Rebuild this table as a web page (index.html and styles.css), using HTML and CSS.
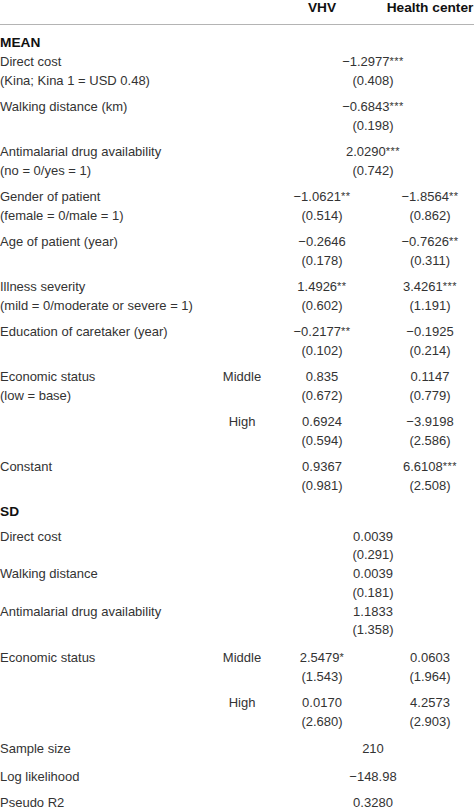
FILE: index.html
```html
<!DOCTYPE html>
<html>
<head>
<meta charset="utf-8">
<link rel="stylesheet" href="styles.css">
</head>
<body>
<div class="table">
  <div class="row head">
    <div class="c-label"></div>
    <div class="c-sub"></div>
    <div class="c-vhv">VHV</div>
    <div class="c-hc">Health center</div>
  </div>

  <div class="row section first"><div class="c-label">MEAN</div></div>

  <div class="row">
    <div class="c-label">Direct cost<br>(Kina; Kina 1 = USD 0.48)</div>
    <div class="c-span">−1.2977<span class="st">***</span><br>(0.408)</div>
  </div>
  <div class="row">
    <div class="c-label">Walking distance (km)</div>
    <div class="c-span">−0.6843<span class="st">***</span><br>(0.198)</div>
  </div>
  <div class="row">
    <div class="c-label">Antimalarial drug availability<br>(no = 0/yes = 1)</div>
    <div class="c-span">2.0290<span class="st">***</span><br>(0.742)</div>
  </div>
  <div class="row">
    <div class="c-label">Gender of patient<br>(female = 0/male = 1)</div>
    <div class="c-vhv">−1.0621<span class="st">**</span><br>(0.514)</div>
    <div class="c-hc">−1.8564<span class="st">**</span><br>(0.862)</div>
  </div>
  <div class="row">
    <div class="c-label">Age of patient (year)</div>
    <div class="c-vhv">−0.2646<br>(0.178)</div>
    <div class="c-hc">−0.7626<span class="st">**</span><br>(0.311)</div>
  </div>
  <div class="row">
    <div class="c-label">Illness severity<br>(mild = 0/moderate or severe = 1)</div>
    <div class="c-vhv">1.4926<span class="st">**</span><br>(0.602)</div>
    <div class="c-hc">3.4261<span class="st">***</span><br>(1.191)</div>
  </div>
  <div class="row">
    <div class="c-label">Education of caretaker (year)</div>
    <div class="c-vhv">−0.2177<span class="st">**</span><br>(0.102)</div>
    <div class="c-hc">−0.1925<br>(0.214)</div>
  </div>
  <div class="row">
    <div class="c-label">Economic status<br>(low = base)</div>
    <div class="c-sub">Middle</div>
    <div class="c-vhv">0.835<br>(0.672)</div>
    <div class="c-hc">0.1147<br>(0.779)</div>
  </div>
  <div class="row">
    <div class="c-label"></div>
    <div class="c-sub">High</div>
    <div class="c-vhv">0.6924<br>(0.594)</div>
    <div class="c-hc">−3.9198<br>(2.586)</div>
  </div>
  <div class="row">
    <div class="c-label">Constant</div>
    <div class="c-vhv">0.9367<br>(0.981)</div>
    <div class="c-hc">6.6108<span class="st">***</span><br>(2.508)</div>
  </div>

  <div class="row section"><div class="c-label">SD</div></div>

  <div class="row tight">
    <div class="c-label">Direct cost</div>
    <div class="c-span">0.0039<br>(0.291)</div>
  </div>
  <div class="row tight">
    <div class="c-label">Walking distance</div>
    <div class="c-span">0.0039<br>(0.181)</div>
  </div>
  <div class="row tight last">
    <div class="c-label">Antimalarial drug availability</div>
    <div class="c-span">1.1833<br>(1.358)</div>
  </div>
  <div class="row wide">
    <div class="c-label">Economic status</div>
    <div class="c-sub">Middle</div>
    <div class="c-vhv">2.5479<span class="st">*</span><br>(1.543)</div>
    <div class="c-hc">0.0603<br>(1.964)</div>
  </div>
  <div class="row wide">
    <div class="c-label"></div>
    <div class="c-sub">High</div>
    <div class="c-vhv">0.0170<br>(2.680)</div>
    <div class="c-hc">4.2573<br>(2.903)</div>
  </div>
  <div class="row wide loose">
    <div class="c-label">Sample size</div>
    <div class="c-span">210</div>
  </div>
  <div class="row wide">
    <div class="c-label">Log likelihood</div>
    <div class="c-span">−148.98</div>
  </div>
  <div class="row wide">
    <div class="c-label">Pseudo R2</div>
    <div class="c-span">0.3280</div>
  </div>
</div>
</body>
</html>
```

FILE: styles.css
```css
html, body {
  margin: 0;
  padding: 0;
  background: #ffffff;
}

body {
  font-family: "Liberation Sans", Arial, Helvetica, sans-serif;
  font-size: 13px;
  color: #333333;
  width: 474px;
  overflow: hidden;
}

.table {
  display: flex;
  flex-direction: column;
}

.row {
  display: grid;
  grid-template-columns: 212px 60px 100px 102px;
  line-height: 19px;
  padding-bottom: 7px;
}

.row.head {
  font-weight: bold;
  color: #111111;
  font-size: 13.7px;
  line-height: 16px;
  padding-bottom: 8px;
  border-bottom: 1px solid #b4b4b4;
}

.row.section {
  font-weight: bold;
  color: #111111;
  font-size: 13.7px;
}

.row.section.first {
  padding-top: 7.5px;
  padding-bottom: 0;
}

.row.tight {
  line-height: 18.8px;
  padding-bottom: 0;
}

.row.tight.last {
  padding-bottom: 7.5px;
}

.row.wide {
  padding-bottom: 7.5px;
}

.row.wide.loose {
  padding-bottom: 9px;
}

.c-label {
  grid-column: 1;
  white-space: nowrap;
}

.c-sub {
  grid-column: 2;
  text-align: center;
  white-space: nowrap;
}

.c-vhv {
  grid-column: 3;
  text-align: center;
  white-space: nowrap;
}

.c-hc {
  grid-column: 4;
  text-align: center;
  padding-left: 14px;
  white-space: nowrap;
}

.c-span {
  grid-column: 3 / 5;
  text-align: center;
  white-space: nowrap;
}

.st {
  font-size: 11px;
  line-height: 0;
  position: relative;
  top: -1px;
  letter-spacing: 0.5px;
}
```
